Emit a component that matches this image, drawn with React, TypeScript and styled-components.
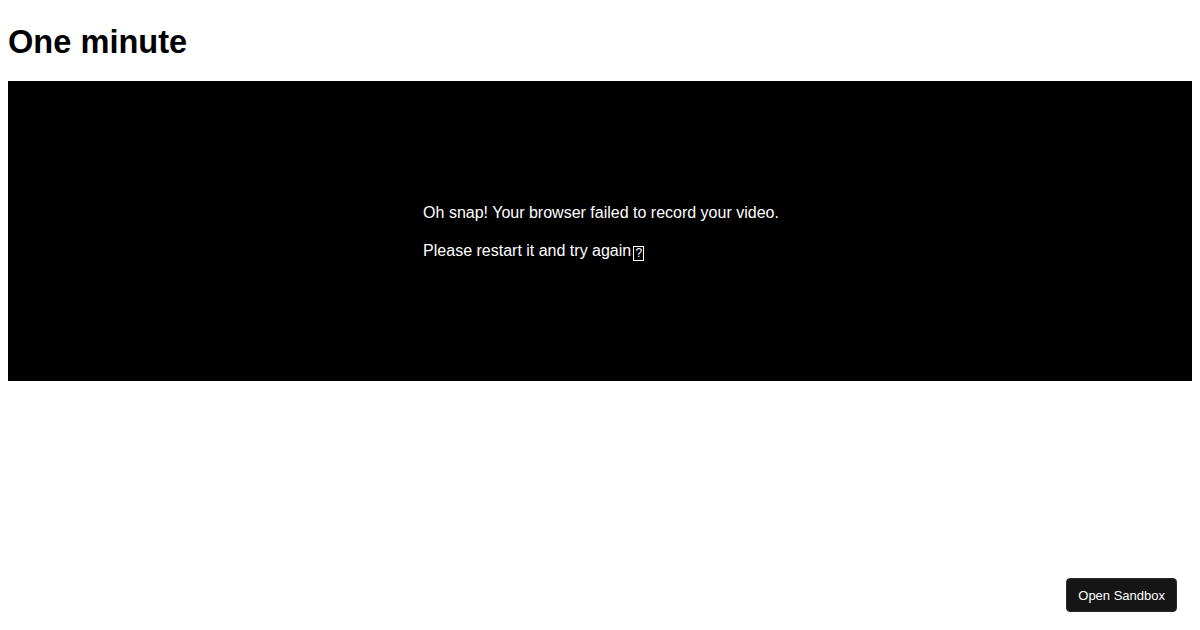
import React from "react";
import styled, { createGlobalStyle } from "styled-components";

const Global = createGlobalStyle`
  body {
    margin: 8px;
    font-family: "Liberation Sans", Arial, sans-serif;
    background: #fff;
    color: #000;
  }
`;

const Title = styled.h1`
  font-size: 32.6px;
  font-weight: 700;
  margin: 14.5px 0 21.5px;
  line-height: 37px;
`;

const Stage = styled.div`
  height: 300px;
  background: #000;
  color: #fff;
  display: flex;
  flex-direction: column;
  align-items: center;
  justify-content: center;
`;

const Message = styled.div`
  font-size: 16px;
  line-height: 18px;
  padding-top: 2px;
  padding-left: 2px;
`;

const Line = styled.p`
  margin: 20px 0;
`;

const Tofu = styled.span`
  display: inline-block;
  box-sizing: border-box;
  width: 11px;
  height: 15px;
  border: 1px solid #fff;
  font-size: 12px;
  line-height: 13px;
  text-align: center;
  vertical-align: -1px;
  margin-left: 2px;
`;

const SandboxButton = styled.button`
  position: fixed;
  right: 23px;
  bottom: 18px;
  height: 34px;
  padding: 0 11px;
  border: 1px solid #2a2a2a;
  border-radius: 4px;
  background: #151515;
  color: #fff;
  font-family: "Liberation Sans", Arial, sans-serif;
  font-size: 13px;
  cursor: pointer;
`;

export default function App() {
  return (
    <>
      <Global />
      <Title>One minute</Title>
      <Stage>
        <Message>
          <Line>Oh snap! Your browser failed to record your video.</Line>
          <Line>
            Please restart it and try again<Tofu>?</Tofu>
          </Line>
        </Message>
      </Stage>
      <SandboxButton>Open Sandbox</SandboxButton>
    </>
  );
}
